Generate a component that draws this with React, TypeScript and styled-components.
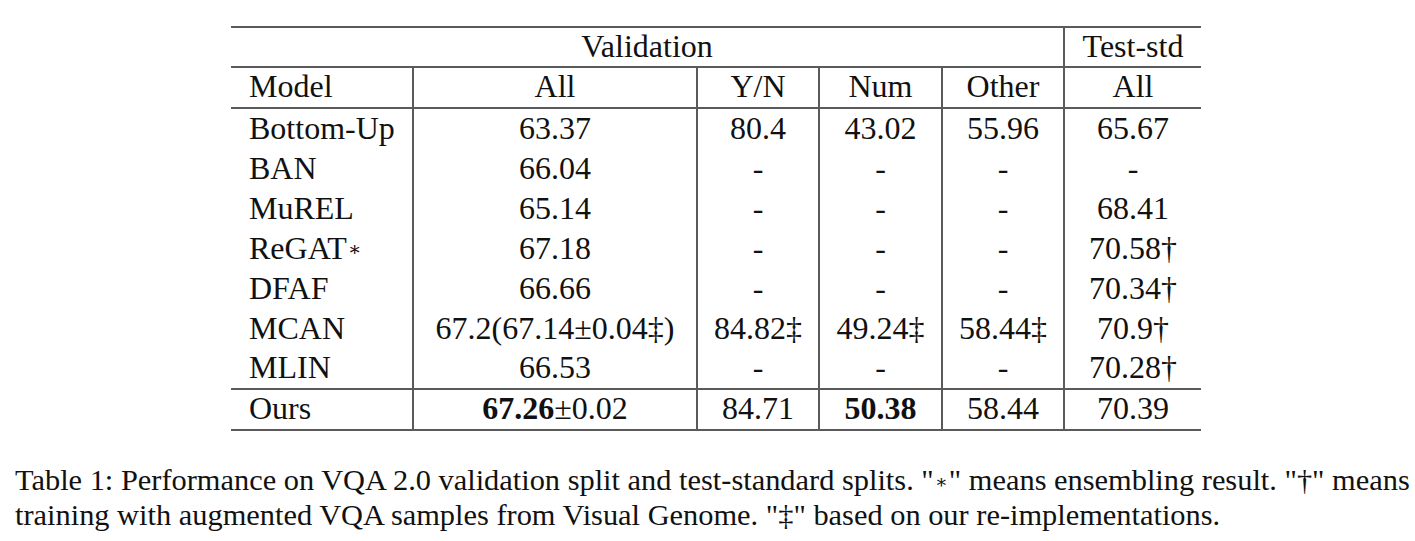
import React from 'react'
import styled, { createGlobalStyle } from 'styled-components'

const GlobalStyle = createGlobalStyle`
  html, body {
    margin: 0;
    padding: 0;
    background: #fff;
  }
  body {
    font-family: 'Liberation Serif', 'Times New Roman', serif;
    color: #111;
  }
`

const Page = styled.div`
  width: 1415px;
  height: 541px;
  padding-top: 26px;
  box-sizing: border-box;
`

const Table = styled.table`
  margin-left: 231px;
  width: 970px;
  border-collapse: collapse;
  table-layout: fixed;
  font-size: 32px;
`

const Rule = '2px solid #5a5a5a'

const Row = styled.tr<{ $topRule?: boolean; $bottomRule?: boolean }>`
  border-top: ${(p) => (p.$topRule ? Rule : 'none')};
  border-bottom: ${(p) => (p.$bottomRule ? Rule : 'none')};
`

const Cell = styled.td<{ $left?: boolean; $sep?: boolean; $h?: number }>`
  height: ${(p) => p.$h ?? 40}px;
  padding: 0 0 3px ${(p) => (p.$left ? '18px' : '0')};
  text-align: ${(p) => (p.$left ? 'left' : 'center')};
  border-right: ${(p) => (p.$sep ? Rule : 'none')};
  line-height: 34px;
  white-space: nowrap;
  box-sizing: border-box;
`

const Strong = styled.b`
  font-weight: bold;
`

// the ∗ glyph falls back to a wide font, so shrink it to the size of the TeX operator
const Ast = styled.span`
  font-family: 'DejaVu Serif', serif;
  font-size: 0.62em;
  line-height: 0;
  position: relative;
  top: -0.12em;
  margin: 0 0.06em;
`

const Caption = styled.p`
  margin: 32px 0 0 15px;
  font-size: 30.4px;
  line-height: 35px;
  white-space: nowrap;
  color: #111;
`

const widths = [182, 284, 122, 123, 122, 137]

type RowData = [React.ReactNode, React.ReactNode, string, React.ReactNode, string, string]

const rows: RowData[] = [
  ['Bottom-Up', '63.37', '80.4', '43.02', '55.96', '65.67'],
  ['BAN', '66.04', '-', '-', '-', '-'],
  ['MuREL', '65.14', '-', '-', '-', '68.41'],
  [
    <>
      ReGAT<Ast>∗</Ast>
    </>,
    '67.18',
    '-',
    '-',
    '-',
    '70.58\u2020',
  ],
  ['DFAF', '66.66', '-', '-', '-', '70.34\u2020'],
  ['MCAN', '67.2(67.14\u00b10.04\u2021)', '84.82\u2021', '49.24\u2021', '58.44\u2021', '70.9\u2020'],
  ['MLIN', '66.53', '-', '-', '-', '70.28\u2020'],
]

const ours: RowData = [
  'Ours',
  <>
    <Strong>67.26</Strong>±0.02
  </>,
  '84.71',
  <Strong>50.38</Strong>,
  '58.44',
  '70.39',
]

function DataRow({ data, h, rule }: { data: RowData; h?: number; rule?: boolean }) {
  return (
    <Row $topRule={rule} $bottomRule={rule}>
      {data.map((v, i) => (
        <Cell key={i} $left={i === 0} $sep={i < 5} $h={h}>
          {v}
        </Cell>
      ))}
    </Row>
  )
}

export default function App() {
  return (
    <Page>
      <GlobalStyle />
      <Table>
        <colgroup>
          {widths.map((w, i) => (
            <col key={i} style={{ width: w }} />
          ))}
        </colgroup>
        <tbody>
          <Row $topRule $bottomRule>
            <Cell colSpan={5} $sep $h={40}>
              Validation
            </Cell>
            <Cell $h={40}>Test-std</Cell>
          </Row>
          <Row $bottomRule>
            <Cell $left $sep $h={41}>
              Model
            </Cell>
            <Cell $sep $h={41}>All</Cell>
            <Cell $sep $h={41}>Y/N</Cell>
            <Cell $sep $h={41}>Num</Cell>
            <Cell $sep $h={41}>Other</Cell>
            <Cell $h={41}>All</Cell>
          </Row>
          {rows.map((r, i) => (
            <DataRow key={i} data={r} h={i === 0 ? 41 : 40} />
          ))}
          <DataRow data={ours} h={41} rule />
        </tbody>
      </Table>
      <Caption>
        Table 1: Performance on VQA 2.0 validation split and test-standard splits. "<Ast>∗</Ast>" means ensembling
        result. "†" means
        <br />
        training with augmented VQA samples from Visual Genome. "‡" based on our re-implementations.
      </Caption>
    </Page>
  )
}
